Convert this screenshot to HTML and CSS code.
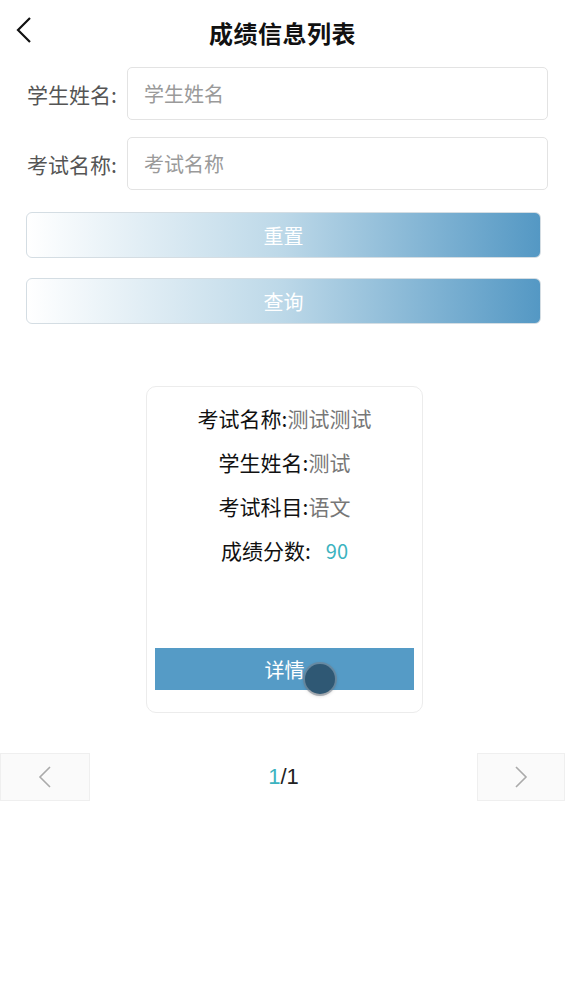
FILE: index.html
```html
<!DOCTYPE html>
<html lang="zh">
<head>
<meta charset="utf-8">
<title>成绩信息列表</title>
<link rel="stylesheet" href="styles.css">
</head>
<body>
<div class="page">
  <header class="nav">
    <span class="back">
      <svg width="18" height="28" viewBox="0 0 18 28"><path d="M15 2 L3 14 L15 26" fill="none" stroke="#111" stroke-width="2.2"/></svg>
    </span>
    <h1 class="title">成绩信息列表</h1>
  </header>

  <section class="form">
    <div class="row">
      <label class="label">学生姓名:</label>
      <div class="input"><span class="ph">学生姓名</span></div>
    </div>
    <div class="row">
      <label class="label">考试名称:</label>
      <div class="input"><span class="ph">考试名称</span></div>
    </div>
    <div class="btns">
      <div class="btn">重置</div>
      <div class="btn">查询</div>
    </div>
  </section>

  <section class="list">
    <div class="card">
      <div class="lines">
        <p class="line"><span class="k">考试名称:</span><span class="v">测试测试</span></p>
        <p class="line"><span class="k">学生姓名:</span><span class="v">测试</span></p>
        <p class="line"><span class="k">考试科目:</span><span class="v">语文</span></p>
        <p class="line"><span class="k">成绩分数:</span><span class="score">90</span></p>
      </div>
      <div class="detail">详情<span class="touch"></span></div>
    </div>
  </section>

  <nav class="pager">
    <div class="pbtn">
      <svg width="14" height="24" viewBox="0 0 14 24"><path d="M12 2 L2 12 L12 22" fill="none" stroke="#aaa" stroke-width="1.6"/></svg>
    </div>
    <div class="pnum"><span class="cur">1</span>/1</div>
    <div class="pbtn">
      <svg width="14" height="24" viewBox="0 0 14 24"><path d="M2 2 L12 12 L2 22" fill="none" stroke="#aaa" stroke-width="1.6"/></svg>
    </div>
  </nav>
</div>
</body>
</html>
```

FILE: styles.css
```css
* { box-sizing: border-box; }
html, body {
  margin: 0;
  padding: 0;
  background: #fff;
  font-family: "Noto Sans CJK SC", "Noto Sans", sans-serif;
  color: #222;
}
.page { width: 565px; }

.nav {
  position: relative;
  height: 66px;
  display: flex;
  align-items: center;
  justify-content: center;
}
.back {
  position: absolute;
  left: 15px;
  top: 16px;
  display: flex;
}
.title {
  margin: 0;
  font-size: 24px;
  font-weight: 700;
  color: #111;
  line-height: 1;
  letter-spacing: 0.5px;
}

.form {
  padding: 1px 17px 0 26px;
  display: flex;
  flex-direction: column;
}
.row {
  display: flex;
  align-items: center;
  height: 53px;
  margin-bottom: 17px;
}
.label {
  width: 101px;
  font-size: 21px;
  color: #555;
  padding-left: 1px;
  white-space: nowrap;
}
.input {
  flex: 1;
  height: 53px;
  border: 1px solid #e3e3e3;
  border-radius: 5px;
  display: flex;
  align-items: center;
  padding-left: 16px;
}
.ph {
  font-size: 20px;
  color: #9a9a9a;
}
.btns {
  display: flex;
  flex-direction: column;
  gap: 20px;
  margin-top: 5px;
  margin-right: 7px;
}
.btn {
  height: 46px;
  border-radius: 6px;
  border: 1px solid #d4dde3;
  background: linear-gradient(to right, #ffffff 0%, #bcd8e8 50%, #5498c4 100%);
  color: #fff;
  font-size: 20px;
  display: flex;
  align-items: center;
  justify-content: center;
}

.list {
  display: flex;
  justify-content: center;
  padding-top: 62px;
  padding-left: 4px;
}
.card {
  width: 277px;
  height: 327px;
  border: 1px solid #ececec;
  border-radius: 10px;
  padding: 19px 8px 22px;
  display: flex;
  flex-direction: column;
  justify-content: space-between;
}
.lines {
  display: flex;
  flex-direction: column;
  gap: 20px;
}
.line {
  margin: 0;
  text-align: center;
  font-size: 21px;
  line-height: 24px;
  color: #111;
  white-space: nowrap;
}
.v { color: #777; }
.score {
  color: #3cb3c0;
  margin-left: 15px;
  font-size: 20px;
}
.detail {
  position: relative;
  height: 42px;
  background: #559bc6;
  color: #fff;
  font-size: 20px;
  display: flex;
  align-items: center;
  justify-content: center;
}
.touch {
  position: absolute;
  left: 150px;
  top: 16px;
  width: 30px;
  height: 30px;
  border-radius: 50%;
  background: #2f5874;
  box-shadow: 0 0 0 2px rgba(120,130,140,0.55), 0 1px 4px rgba(0,0,0,0.3);
}

.pager {
  margin-top: 40px;
  display: flex;
  justify-content: space-between;
  align-items: center;
}
.pbtn {
  width: 90px;
  height: 48px;
  background: #fafafa;
  border: 1px solid #efefef;
  display: flex;
  align-items: center;
  justify-content: center;
}
.pbtn:last-child { width: 88px; }
.pnum {
  font-family: "Liberation Sans", Arial, sans-serif;
  font-size: 22px;
  color: #222;
}
.cur { color: #3cb3c0; }
```
